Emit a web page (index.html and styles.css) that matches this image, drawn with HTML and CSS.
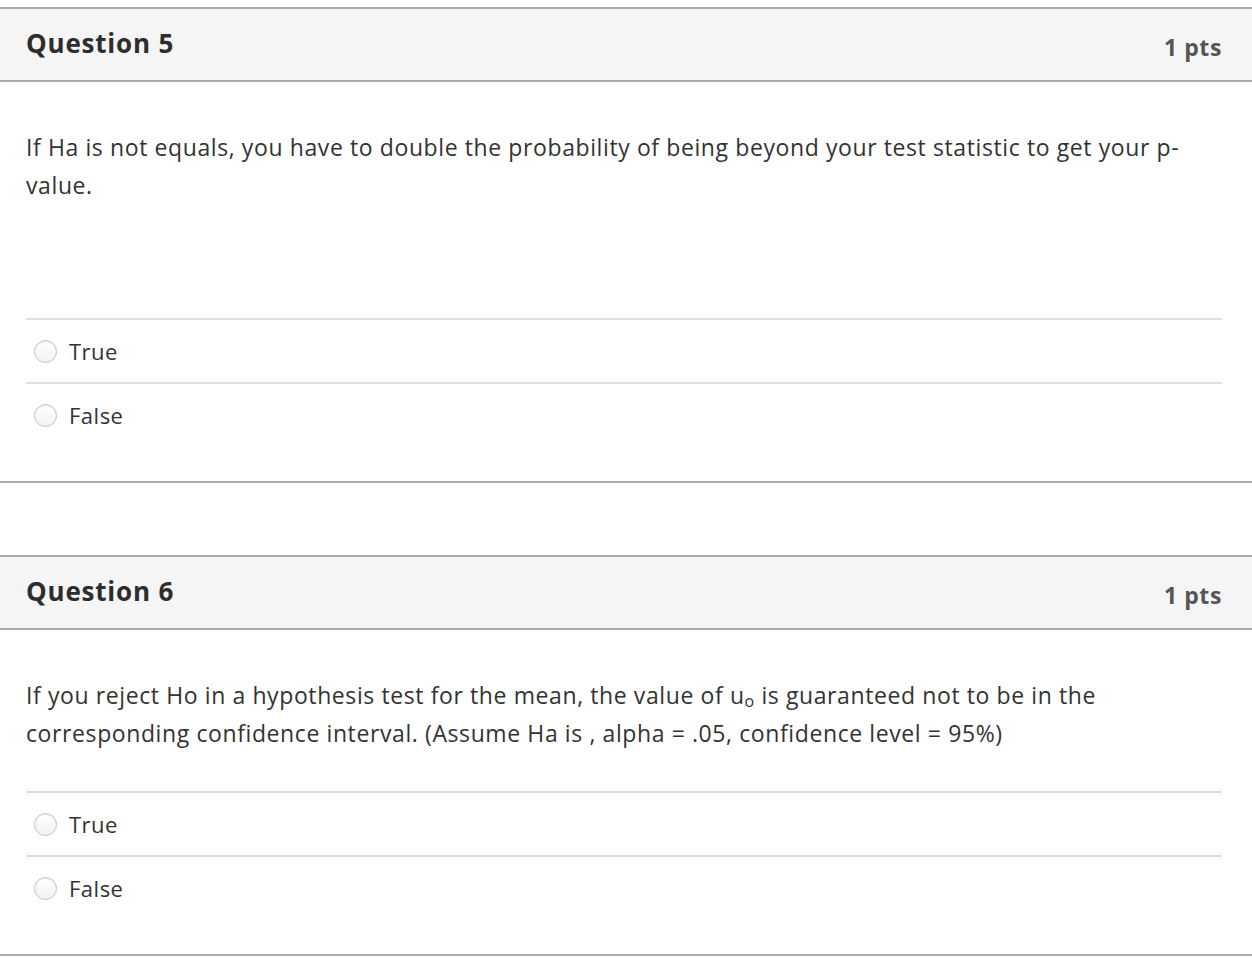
FILE: index.html
```html
<!DOCTYPE html>
<html>
<head>
<meta charset="utf-8">
<link rel="stylesheet" href="styles.css">
</head>
<body>
<div class="page">
  <div class="question">
    <div class="q-header">
      <h2 class="q-title">Question 5</h2>
      <div class="q-pts">1 pts</div>
    </div>
    <div class="q-content">
      <div class="q-text q-text-tall">If Ha is not equals, you have to double the probability of being beyond your test statistic to get your p-value.</div>
      <div class="answers">
        <label class="answer"><span class="radio"></span><span class="answer-label">True</span></label>
        <label class="answer"><span class="radio"></span><span class="answer-label">False</span></label>
      </div>
    </div>
  </div>

  <div class="question">
    <div class="q-header">
      <h2 class="q-title">Question 6</h2>
      <div class="q-pts">1 pts</div>
    </div>
    <div class="q-content">
      <div class="q-text">If you reject Ho in a hypothesis test for the mean, the value of u<sub class="sub">o</sub> is guaranteed not to be in the corresponding confidence interval. (Assume Ha is , alpha = .05, confidence level = 95%)</div>
      <div class="answers">
        <label class="answer"><span class="radio"></span><span class="answer-label">True</span></label>
        <label class="answer"><span class="radio"></span><span class="answer-label">False</span></label>
      </div>
    </div>
  </div>
</div>
</body>
</html>
```
FILE: styles.css
```css
html, body {
  margin: 0;
  padding: 0;
  background: #fff;
}
body {
  font-family: "Open Sans", Lato, sans-serif;
  color: #2d3b45;
}
.page {
  padding-top: 7px;
  display: flex;
  flex-direction: column;
  gap: 72px;
}
.question {
  border-top: 2px solid #aaaaaa;
  border-bottom: 2px solid #aaaaaa;
}
.q-header {
  background: #f5f5f5;
  border-bottom: 2px solid #aaaaaa;
  height: 71px;
  display: flex;
  align-items: center;
  justify-content: space-between;
  padding: 0 30px 0 26px;
}
.q-title {
  margin: 0;
  font-size: 26px;
  letter-spacing: 0.8px;
  font-weight: 700;
  color: #2d2d2d;
  padding-bottom: 4px;
}
.q-pts {
  font-size: 23px;
  letter-spacing: 0.6px;
  font-weight: 700;
  color: #555;
  padding-top: 4px;
}
.q-content {
  padding: 46px 30px 35px 26px;
}
.q-text {
  font-size: 23px;
  letter-spacing: 0.6px;
  line-height: 38px;
  color: #333;
  padding-bottom: 39px;
}
.q-text-tall {
  min-height: 151px;
}
.sub {
  font-size: 16px;
  line-height: 0;
  vertical-align: -3px;
}
.answers {
  display: flex;
  flex-direction: column;
}
.answer {
  display: flex;
  align-items: center;
  gap: 12px;
  height: 62px;
  border-top: 2px solid #dddddd;
  padding-left: 8px;
}
.radio {
  width: 21px;
  height: 21px;
  border-radius: 50%;
  border: 1px solid #c4c4c4;
  background: linear-gradient(#ffffff, #f2f2f2);
  box-shadow: inset 0 1px 1px rgba(0,0,0,0.10);
  flex: none;
}
.answer-label {
  font-size: 22px;
  letter-spacing: 0.5px;
  color: #333;
}
```
